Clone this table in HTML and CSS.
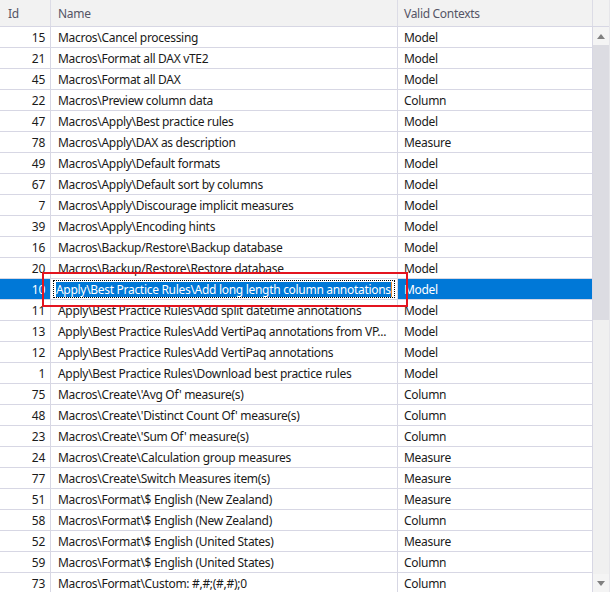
FILE: index.html
```html
<!DOCTYPE html>
<html>
<head>
<meta charset="utf-8">
<link rel="stylesheet" href="styles.css">
</head>
<body>
<div class="window">
  <div class="grid">
    <div class="row head">
      <div class="cell id">Id</div>
      <div class="cell name">Name</div>
      <div class="cell ctx">Valid Contexts</div>
    </div>
    <div class="row"><div class="cell id">15</div><div class="cell name">Macros\Cancel processing</div><div class="cell ctx">Model</div></div>
    <div class="row"><div class="cell id">21</div><div class="cell name">Macros\Format all DAX vTE2</div><div class="cell ctx">Model</div></div>
    <div class="row"><div class="cell id">45</div><div class="cell name">Macros\Format all DAX</div><div class="cell ctx">Model</div></div>
    <div class="row"><div class="cell id">22</div><div class="cell name">Macros\Preview column data</div><div class="cell ctx">Column</div></div>
    <div class="row"><div class="cell id">47</div><div class="cell name">Macros\Apply\Best practice rules</div><div class="cell ctx">Model</div></div>
    <div class="row"><div class="cell id">78</div><div class="cell name">Macros\Apply\DAX as description</div><div class="cell ctx">Measure</div></div>
    <div class="row"><div class="cell id">49</div><div class="cell name">Macros\Apply\Default formats</div><div class="cell ctx">Model</div></div>
    <div class="row"><div class="cell id">67</div><div class="cell name">Macros\Apply\Default sort by columns</div><div class="cell ctx">Model</div></div>
    <div class="row"><div class="cell id">7</div><div class="cell name">Macros\Apply\Discourage implicit measures</div><div class="cell ctx">Model</div></div>
    <div class="row"><div class="cell id">39</div><div class="cell name">Macros\Apply\Encoding hints</div><div class="cell ctx">Model</div></div>
    <div class="row"><div class="cell id">16</div><div class="cell name">Macros\Backup/Restore\Backup database</div><div class="cell ctx">Model</div></div>
    <div class="row"><div class="cell id">20</div><div class="cell name">Macros\Backup/Restore\Restore database</div><div class="cell ctx">Model</div></div>
    <div class="row selected">
      <div class="cell id">10</div>
      <div class="cell name edit"><div class="editbox"><span class="sel">Apply\Best Practice Rules\Add long length column annotations</span><span class="caret"></span></div></div>
      <div class="cell ctx">Model</div>
    </div>
    <div class="row"><div class="cell id">11</div><div class="cell name">Apply\Best Practice Rules\Add split datetime annotations</div><div class="cell ctx">Model</div></div>
    <div class="row"><div class="cell id">13</div><div class="cell name">Apply\Best Practice Rules\Add VertiPaq annotations from VP...</div><div class="cell ctx">Model</div></div>
    <div class="row"><div class="cell id">12</div><div class="cell name">Apply\Best Practice Rules\Add VertiPaq annotations</div><div class="cell ctx">Model</div></div>
    <div class="row"><div class="cell id">1</div><div class="cell name">Apply\Best Practice Rules\Download best practice rules</div><div class="cell ctx">Model</div></div>
    <div class="row"><div class="cell id">75</div><div class="cell name">Macros\Create\'Avg Of' measure(s)</div><div class="cell ctx">Column</div></div>
    <div class="row"><div class="cell id">48</div><div class="cell name">Macros\Create\'Distinct Count Of' measure(s)</div><div class="cell ctx">Column</div></div>
    <div class="row"><div class="cell id">23</div><div class="cell name">Macros\Create\'Sum Of' measure(s)</div><div class="cell ctx">Column</div></div>
    <div class="row"><div class="cell id">24</div><div class="cell name">Macros\Create\Calculation group measures</div><div class="cell ctx">Measure</div></div>
    <div class="row"><div class="cell id">77</div><div class="cell name">Macros\Create\Switch Measures item(s)</div><div class="cell ctx">Measure</div></div>
    <div class="row"><div class="cell id">51</div><div class="cell name">Macros\Format\$ English (New Zealand)</div><div class="cell ctx">Measure</div></div>
    <div class="row"><div class="cell id">58</div><div class="cell name">Macros\Format\$ English (New Zealand)</div><div class="cell ctx">Column</div></div>
    <div class="row"><div class="cell id">52</div><div class="cell name">Macros\Format\$ English (United States)</div><div class="cell ctx">Measure</div></div>
    <div class="row"><div class="cell id">59</div><div class="cell name">Macros\Format\$ English (United States)</div><div class="cell ctx">Column</div></div>
    <div class="row"><div class="cell id">73</div><div class="cell name">Macros\Format\Custom: #,#;(#,#);0</div><div class="cell ctx">Column</div></div>
  </div>
  <div class="scrollbar">
    <div class="sb-head"></div>
    <div class="sb-btn"><span class="arrow up"></span></div>
    <div class="sb-thumb"></div>
    <div class="sb-track"></div>
    <div class="sb-btn"><span class="arrow down"></span></div>
  </div>
  <div class="highlight"></div>
</div>
</body>
</html>
```

FILE: styles.css
```css
html, body {
  margin: 0;
  padding: 0;
  background: #ffffff;
}
body {
  font-family: "Noto Sans", "Open Sans", sans-serif;
  font-size: 12px;
  letter-spacing: -0.3px;
  color: #1a1a1a;
}
.window {
  position: relative;
  width: 610px;
  height: 592px;
  overflow: hidden;
  display: flex;
}
.grid {
  width: 593px;
  flex: none;
  display: flex;
  flex-direction: column;
}
.row {
  display: flex;
  height: 21px;
  flex: none;
  box-sizing: border-box;
  border-bottom: 1px solid #d7d7e4;
}
.row.head {
  height: 27px;
  background: #f2f2f2;
  color: #555566;
  border-bottom: 1px solid #d7d7e4;
}
.cell {
  box-sizing: border-box;
  border-right: 1px solid #d7d7e4;
  display: flex;
  align-items: center;
  white-space: nowrap;
  overflow: hidden;
}
.head .cell {
  border-right-color: #dcdce6;
}
.cell.id {
  width: 51px;
  justify-content: flex-end;
  padding-right: 5px;
}
.head .cell.id {
  justify-content: flex-start;
  padding-left: 8px;
}
.cell.name {
  width: 347px;
  padding-left: 7px;
}
.cell.ctx {
  width: 195px;
  padding-left: 6px;
}
.selected .cell.id,
.selected .cell.ctx {
  background: #0078d7;
  color: #ffffff;
}
.cell.edit {
  padding: 1px 2px 1px 2px;
  background: #ffffff;
}
.editbox {
  box-sizing: border-box;
  width: 100%;
  height: 100%;
  border: 1px dotted #000000;
  display: flex;
  align-items: center;
  padding-left: 2px;
}
.sel {
  background: #0078d7;
  color: #ffffff;
  line-height: 15px;
  height: 15px;
  overflow: hidden;
}
.caret {
  width: 1px;
  height: 15px;
  background: #e08a2a;
}
.scrollbar {
  width: 17px;
  flex: none;
  display: flex;
  flex-direction: column;
  border-right: 1px solid #e6e6ea;
  box-sizing: border-box;
}
.sb-head {
  height: 27px;
  flex: none;
  background: #f2f2f2;
  box-sizing: border-box;
  border-bottom: 1px solid #d7d7e4;
}
.sb-btn {
  height: 18px;
  flex: none;
  background: #f4f4f4;
  display: flex;
  align-items: center;
  justify-content: center;
}
.arrow {
  width: 0;
  height: 0;
  border-left: 4px solid transparent;
  border-right: 4px solid transparent;
}
.arrow.up {
  border-bottom: 5px solid #808080;
}
.arrow.down {
  border-top: 5px solid #808080;
}
.sb-thumb {
  height: 275px;
  flex: none;
  background: #dcdce2;
}
.sb-track {
  flex: 1;
  background: #f0f0f0;
}
.highlight {
  position: absolute;
  left: 42px;
  top: 272px;
  width: 366px;
  height: 35px;
  box-sizing: border-box;
  border: 2px solid #e3141f;
}
```
